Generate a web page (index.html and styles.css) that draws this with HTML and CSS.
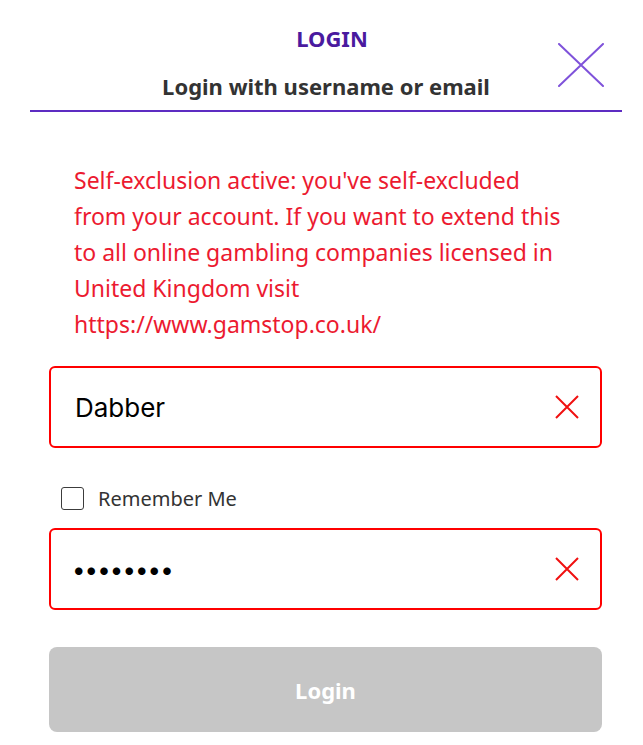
FILE: index.html
```html
<!DOCTYPE html>
<html lang="en">
<head>
<meta charset="utf-8">
<title>Login</title>
<link rel="stylesheet" href="styles.css">
</head>
<body>
<div class="modal">
  <header class="header">
    <div class="spacer"></div>
    <div class="titles">
      <h1 class="title">LOGIN</h1>
      <p class="subtitle">Login with username or email</p>
    </div>
    <button class="close" aria-label="Close">
      <svg width="46" height="44" viewBox="0 0 46 44"><path d="M1 1 L45 43 M45 1 L1 43" stroke="#7f52da" stroke-width="2" fill="none" stroke-linecap="round"/></svg>
    </button>
  </header>

  <p class="error">
    <span>Self-exclusion active: you've self-excluded</span><br>
    <span>from your account. If you want to extend this</span><br>
    <span>to all online gambling companies licensed in</span><br>
    <span>United Kingdom visit</span><br>
    <span>https://www.gamstop.co.uk/</span>
  </p>

  <div class="field">
    <span class="value">Dabber</span>
    <svg class="clear" width="24" height="24" viewBox="0 0 24 24"><path d="M1 1 L23 23 M23 1 L1 23" stroke="#f01010" stroke-width="2" fill="none"/></svg>
  </div>

  <label class="remember">
    <span class="box"></span>
    <span class="label">Remember Me</span>
  </label>

  <div class="field">
    <span class="value dots">••••••••</span>
    <svg class="clear" width="24" height="24" viewBox="0 0 24 24"><path d="M1 1 L23 23 M23 1 L1 23" stroke="#f01010" stroke-width="2" fill="none"/></svg>
  </div>

  <button class="submit">Login</button>
</div>
</body>
</html>
```

FILE: styles.css
```css
* { box-sizing: border-box; }
html, body { margin: 0; padding: 0; background: #fff; }
body { font-family: "Noto Sans", "Open Sans", sans-serif; }

.modal {
  width: 643px;
  padding-bottom: 13px;
}

.header {
  display: grid;
  grid-template-columns: 64px 1fr 64px;
  margin: 0 21px 0 30px;
  padding-top: 24px;
  padding-bottom: 10px;
  border-bottom: 2px solid #5d2cc2;
}

.titles { text-align: center; }

.title {
  margin: 0 0 0 12px;
  font-size: 22px;
  line-height: 28px;
  font-weight: 700;
  color: #4a1a9f;
}

.subtitle {
  margin: 20px 0 0;
  font-size: 22px;
  line-height: 28px;
  font-weight: 700;
  color: #333;
}

.close {
  align-self: start;
  margin-top: 19px;
  padding: 0;
  border: 0;
  background: none;
  width: 46px;
  height: 44px;
  display: block;
}
.close svg { display: block; }

.error {
  margin: 50px 0 0 74px;
  font-size: 23px;
  line-height: 36px;
  color: #ec1a30;
  white-space: nowrap;
}

.field {
  margin: 24px 41px 0 49px;
  height: 82px;
  border: 2.5px solid #f00;
  border-radius: 6px;
  display: flex;
  align-items: center;
  justify-content: space-between;
  padding: 0 21px 0 24px;
}

.value {
  font-family: Inter, "Liberation Sans", sans-serif;
  font-size: 26px;
  color: #000;
}

.dots {
  margin-left: -3px;
  font-size: 24px;
  letter-spacing: -0.9px;
}

.clear { display: block; }

.remember {
  display: flex;
  align-items: center;
  gap: 14px;
  margin: 38px 0 18px 61px;
  height: 24px;
}

.box {
  width: 23px;
  height: 23px;
  border: 1.5px solid #3c3c3c;
  border-radius: 3px;
}

.label {
  font-size: 20px;
  color: #333;
}

.remember + .field { margin-top: 18px; }

.submit {
  display: block;
  margin: 37px 41px 0 49px;
  width: 553px;
  height: 85px;
  border: 0;
  border-radius: 8px;
  background: #c6c6c6;
  color: #fff;
  font-family: "Noto Sans", "Open Sans", sans-serif;
  font-size: 22px;
  font-weight: 700;
}
```
